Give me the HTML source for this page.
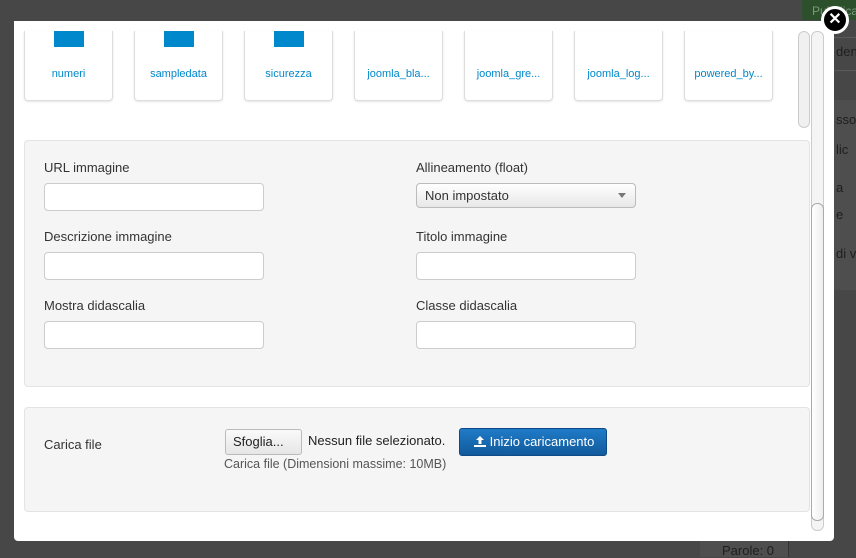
<!DOCTYPE html>
<html><head><style>
*{box-sizing:border-box;margin:0;padding:0}
body{width:856px;height:557px;background:#474747;font-family:"Liberation Sans",sans-serif;font-size:13px;color:#333;position:relative;overflow:hidden}
.abs{position:absolute}
.modal{left:14px;top:21px;width:820px;height:520px;background:#fff;border-radius:0 0 4px 4px}
.card{position:absolute;top:10px;width:89px;height:70px;border:1px solid #ddd;border-top:none;border-radius:0 0 4px 4px;box-shadow:0 1px 2px rgba(0,0,0,.1);background:#fff;text-align:center}
.card span{position:absolute;left:0;right:0;top:37px;font-size:11px;color:#0088cc}
.card i{position:absolute;left:29px;top:0;width:30px;height:16px;background:#0088cc}
.well{position:absolute;left:10px;width:786px;background:#f5f5f5;border:1px solid #e3e3e3;border-radius:4px}
label{position:absolute;font-size:13px;color:#333}
.inp{position:absolute;width:220px;height:28px;background:#fff;border:1px solid #ccc;border-radius:4px}
.txt{position:absolute;font-size:12px;color:#555;white-space:nowrap}
.side{position:absolute;left:836px;color:#1e1e1e;font-size:13px;white-space:nowrap;width:20px;overflow:hidden}
</style></head><body>
<div class="abs" style="left:802px;top:0;width:54px;height:20px;background:#2c4f2c;border-radius:0 0 0 3px;color:#7a9a7a;font-size:12px;padding:4px 10px;white-space:nowrap;overflow:hidden">Pubblica</div>
<div class="abs" style="left:834px;top:100px;width:22px;height:190px;background:#4e4e4e"></div>
<div class="abs" style="left:834px;top:37px;width:22px;height:1px;background:#5a5a5a"></div>
<div class="abs" style="left:834px;top:70px;width:22px;height:1px;background:#5a5a5a"></div>
<div class="side" style="top:112px">sso</div>
<div class="side" style="top:142px">lic</div>
<div class="side" style="top:180px">a</div>
<div class="side" style="top:207px">e</div>
<div class="side" style="top:246px">di v</div>
<div class="side" style="top:44px">den</div>
<div class="abs" style="left:700px;top:541px;width:88px;height:16px;background:#4e4e4e"></div>
<div class="abs" style="left:722px;top:543px;color:#1e1e1e;font-size:13px">Parole: 0</div>
<div class="abs" style="left:788px;top:541px;width:1px;height:16px;background:#333"></div>

<div class="abs modal">
  <div class="card" style="left:10px"><i></i><span>numeri</span></div>
  <div class="card" style="left:120px"><i></i><span>sampledata</span></div>
  <div class="card" style="left:230px"><i></i><span>sicurezza</span></div>
  <div class="card" style="left:340px"><span>joomla_bla...</span></div>
  <div class="card" style="left:450px"><span>joomla_gre...</span></div>
  <div class="card" style="left:560px"><span>joomla_log...</span></div>
  <div class="card" style="left:670px"><span>powered_by...</span></div>
  <div class="abs" style="left:784px;top:10px;width:12px;height:97px;background:#f0f0f0;border:1px solid #ccc;border-radius:6px"></div>

  <div class="well" style="top:119px;height:247px">
    <label style="left:19px;top:19px">URL immagine</label>
    <div class="inp" style="left:19px;top:42px"></div>
    <label style="left:19px;top:88px">Descrizione immagine</label>
    <div class="inp" style="left:19px;top:111px"></div>
    <label style="left:19px;top:157px">Mostra didascalia</label>
    <div class="inp" style="left:19px;top:180px"></div>
    <label style="left:391px;top:19px">Allineamento (float)</label>
    <div class="inp" style="left:391px;top:42px;height:25px;background:linear-gradient(#fff,#e8e8e8);border-color:#bbb;font-size:13px;padding:4px 8px">Non impostato<span style="position:absolute;right:9px;top:9px;border:4px solid transparent;border-top:5px solid #777"></span></div>
    <label style="left:391px;top:88px">Titolo immagine</label>
    <div class="inp" style="left:391px;top:111px"></div>
    <label style="left:391px;top:157px">Classe didascalia</label>
    <div class="inp" style="left:391px;top:180px"></div>
  </div>

  <div class="well" style="top:386px;height:105px">
    <label style="left:19px;top:29px">Carica file</label>
    <div class="abs" style="left:200px;top:21px;width:77px;height:26px;border:1px solid #bbb;border-radius:3px;background:linear-gradient(#fafafa,#e6e6e6);font-size:13px;padding:4px 7px;color:#222">Sfoglia...</div>
    <div class="txt" style="left:283px;top:25px;font-size:13px;color:#222">Nessun file selezionato.</div>
    <div class="abs" style="left:434px;top:20px;width:148px;height:28px;border-radius:3px;background:linear-gradient(#1f7bc7,#125a9c);border:1px solid #0d4a86;color:#fff;font-size:13px;padding:5px 0 0 14px">
      <svg width="12" height="11" style="vertical-align:-1px" viewBox="0 0 12 11"><path d="M6 0L2 4h2.5v4h3V4H10z M0 9h12v2H0z" fill="#fff"/></svg> Inizio caricamento</div>
    <div class="txt" style="left:199px;top:49px;font-size:12.5px">Carica file (Dimensioni massime: 10MB)</div>
  </div>

  <div class="abs" style="left:797px;top:10px;width:13px;height:500px;background:#f4f4f4;border:1px solid #ccc;border-radius:6px"></div>
  <div class="abs" style="left:797px;top:182px;width:13px;height:318px;background:linear-gradient(90deg,#fff,#eee);border:1px solid #aaa;border-radius:6px"></div>
</div>
<div class="abs" style="left:821px;top:6px;width:28px;height:28px;border-radius:50%;background:#000;border:3px solid #fff;color:#fff;font-weight:bold;font-size:16px;text-align:center;line-height:21px">✕</div>
</body></html>
